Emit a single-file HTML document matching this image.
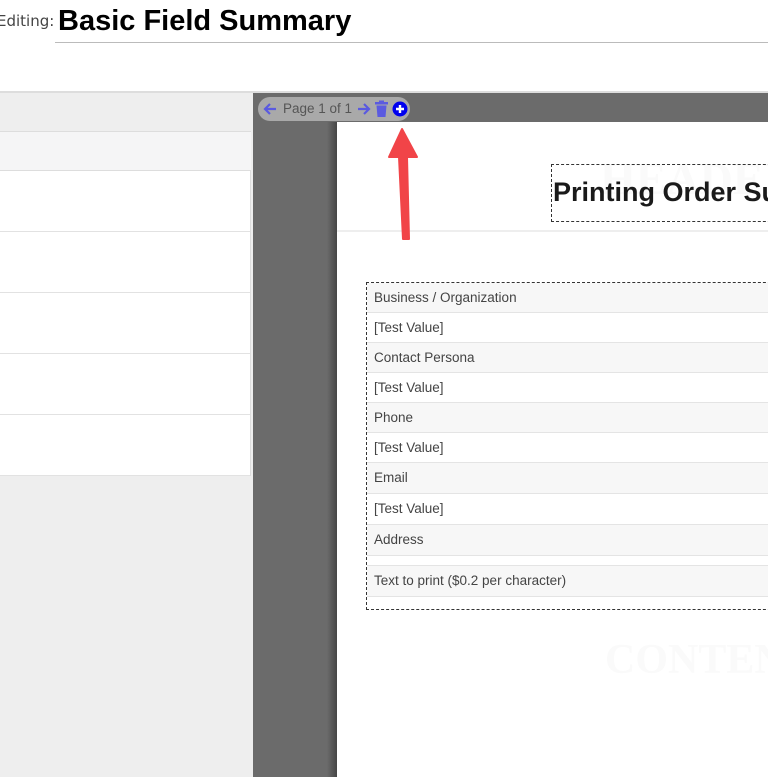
<!DOCTYPE html>
<html><head><style>
*{margin:0;padding:0;box-sizing:border-box}
html,body{width:768px;height:777px;overflow:hidden}
body{background:#fff;font-family:"Liberation Sans",sans-serif;position:relative}
#w{position:absolute;left:0;top:0;width:768px;height:777px;overflow:hidden}
.abs{position:absolute}
.row{height:30px;border-bottom:1px solid #e4e4e4;font-size:13.5px;color:#444;padding-left:7px;line-height:29px}
.g{background:#f7f7f7}
</style></head><body><div id="w">
<div class="abs" style="left:-3px;top:12px;font-size:15px;color:#444;font-family:'DejaVu Sans',sans-serif">Editing:</div>
<div class="abs" style="left:58px;top:5px;font-size:29px;font-weight:bold;color:#000;font-family:'Liberation Sans',sans-serif">Basic Field Summary</div>
<div class="abs" style="left:55px;top:42px;width:713px;height:1px;background:#bbb"></div>

<div class="abs" style="left:0;top:91px;width:768px;height:2px;background:#ddd"></div>
<div class="abs" style="left:0;top:93px;width:253px;height:684px;background:#eee"></div>
<div class="abs" style="left:0;top:131px;width:251px;height:40px;background:#f5f5f6;border-top:1px solid #ddd;border-bottom:1px solid #ddd"></div>
<div class="abs" style="left:0;top:171px;width:251px;height:305px;background:#fff;border-right:1px solid #ddd">
<div style="height:61px;border-bottom:1px solid #e2e2e2"></div>
<div style="height:61px;border-bottom:1px solid #e2e2e2"></div>
<div style="height:61px;border-bottom:1px solid #e2e2e2"></div>
<div style="height:61px;border-bottom:1px solid #e2e2e2"></div>
<div style="height:61px;border-bottom:1px solid #e2e2e2"></div>
</div>

<div class="abs" style="left:253px;top:93px;width:515px;height:684px;background:#6b6b6b"></div>
<div class="abs" style="left:327px;top:122px;width:10px;height:655px;background:linear-gradient(to right,rgba(0,0,0,0),rgba(0,0,0,.35))"></div>
<div class="abs" style="left:337px;top:122px;width:431px;height:655px;background:#fff"></div>
<div class="abs" style="left:337px;top:230px;width:431px;height:2px;background:#eee"></div>
<div class="abs" style="left:600px;top:152px;font-size:46px;font-weight:bold;color:#fafafa;font-family:'Liberation Serif',serif">HEADER</div>
<div class="abs" style="left:605px;top:636px;font-size:42px;font-weight:bold;color:#fafafa;font-family:'Liberation Serif',serif">CONTENT</div>
<div class="abs" style="left:551px;top:164px;width:230px;height:58px;border:1px dashed #333"></div>
<div class="abs" style="left:553px;top:177px;font-size:27px;font-weight:bold;color:#1a1a1a;white-space:nowrap">Printing Order Summary</div>

<div class="abs" style="left:366px;top:282px;width:420px;height:328px;border:1px dashed #333;background:#fff">
<div class="row g">Business / Organization</div>
<div class="row">[Test Value]</div>
<div class="row g">Contact Persona</div>
<div class="row">[Test Value]</div>
<div class="row g">Phone</div>
<div class="row">[Test Value]</div>
<div class="row g" style="height:31px">Email</div>
<div class="row" style="height:31px">[Test Value]</div>
<div class="row g" style="height:31px">Address</div>
<div class="row" style="height:10px"></div>
<div class="row g" style="height:31px">Text to print ($0.2 per character)</div>
</div>

<div class="abs" style="left:258px;top:97px;width:152px;height:24px;background:#a9a9a9;border-radius:12px"></div>
<svg class="abs" style="left:262px;top:101px" width="16" height="16" viewBox="0 0 16 16"><path d="M14 8H3M8 3L3 8l5 5" stroke="#5a5ae0" stroke-width="2.2" fill="none"/></svg>
<div class="abs" style="left:283px;top:101px;font-size:13.5px;color:#555">Page 1 of 1</div>
<svg class="abs" style="left:356px;top:101px" width="16" height="16" viewBox="0 0 16 16"><path d="M2 8h11M8 3l5 5-5 5" stroke="#5a5ae0" stroke-width="2.2" fill="none"/></svg>
<svg class="abs" style="left:374px;top:100px" width="15" height="18" viewBox="0 0 15 18"><rect x="1" y="2" width="13" height="2.5" fill="#5a5ae0"/><rect x="5" y="0.5" width="5" height="2" fill="#5a5ae0"/><path d="M2.5 5.5h10l-1 11.5h-8z" fill="#5a5ae0"/></svg>
<svg class="abs" style="left:392px;top:101px" width="16" height="16" viewBox="0 0 16 16"><circle cx="8" cy="8" r="7.5" fill="#0000ee"/><path d="M8 4v8M4 8h8" stroke="#fff" stroke-width="2.4"/></svg>

<svg class="abs" style="left:380px;top:120px" width="45" height="125" viewBox="0 0 45 125"><path d="M22 9L9 37h10l4 82h6l-2-82h10z" fill="#f14448" stroke="#f14448" stroke-linejoin="round" stroke-width="2"/></svg>
</div></body></html>
